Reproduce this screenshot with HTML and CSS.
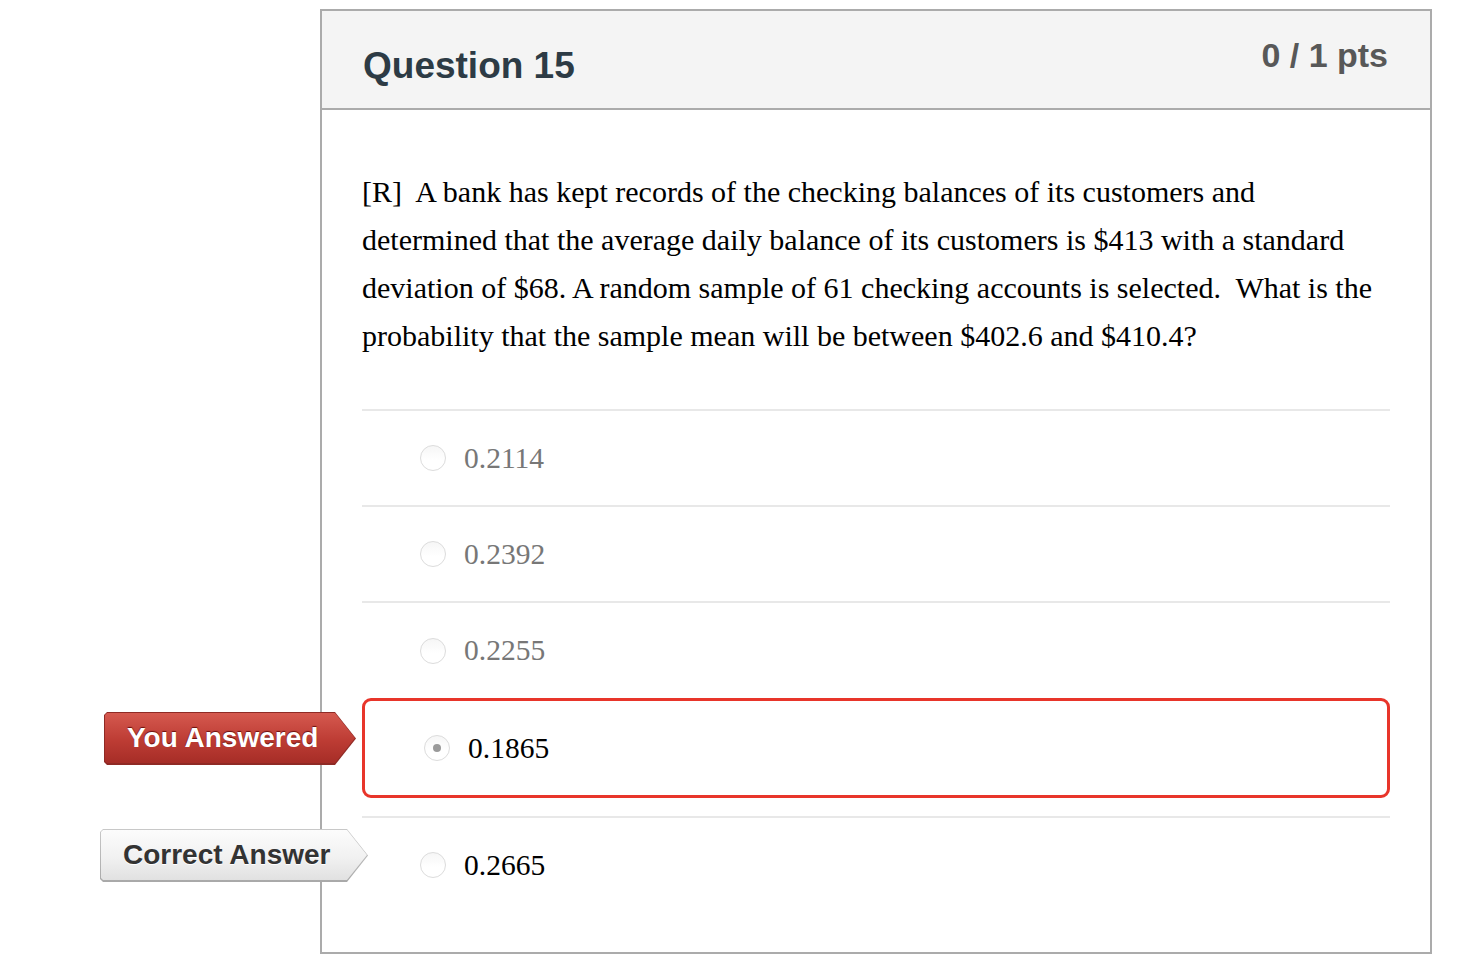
FILE: index.html
```html
<!DOCTYPE html>
<html>
<head>
<meta charset="utf-8">
<link rel="stylesheet" href="styles.css">
</head>
<body>
<div class="card">
  <div class="card-header">
    <h2 class="q-title">Question 15</h2>
    <div class="q-pts">0 / 1 pts</div>
  </div>
  <div class="card-body">
    <p class="q-text">[R]&nbsp; A bank has kept records of the checking balances of its customers and determined that the average daily balance of its customers is $413 with a standard deviation of $68. A random sample of 61 checking accounts is selected.&nbsp; What is the probability that the sample mean will be between $402.6 and $410.4?</p>
    <div class="answers">
      <div class="answer"><span class="radio"></span><span class="a-text">0.2114</span></div>
      <div class="answer"><span class="radio"></span><span class="a-text">0.2392</span></div>
      <div class="answer answer-short"><span class="radio"></span><span class="a-text">0.2255</span></div>
      <div class="answer answer-chosen">
        <div class="tag-wrap tag-you"><div class="tag tag-red">You Answered</div></div>
        <span class="radio radio-on"></span><span class="a-text a-dark">0.1865</span>
      </div>
      <div class="answer answer-correct">
        <div class="tag-wrap tag-correct"><div class="tag tag-gray">Correct Answer</div></div>
        <span class="radio"></span><span class="a-text a-dark">0.2665</span>
      </div>
    </div>
  </div>
</div>
</body>
</html>
```

FILE: styles.css
```css
html, body {
  margin: 0;
  padding: 0;
  background: #ffffff;
}

body {
  font-family: "Liberation Sans", Arial, sans-serif;
}

.card {
  margin: 9px 0 0 320px;
  width: 1108px;
  border: 2px solid #ababab;
  background: #fff;
}

.card-header {
  height: 97px;
  background: #f4f4f4;
  border-bottom: 2px solid #ababab;
  display: flex;
  justify-content: space-between;
  align-items: flex-start;
  padding: 0 42px 0 41px;
}

.q-title {
  margin: 36px 0 0 0;
  font-size: 37px;
  line-height: 1;
  font-weight: bold;
  color: #2d3b45;
}

.q-pts {
  margin-top: 27px;
  font-size: 34px;
  line-height: 1;
  font-weight: bold;
  color: #585858;
}

.card-body {
  padding: 58px 40px 40px 40px;
}

.q-text {
  margin: 0;
  font-family: "Liberation Serif", "Times New Roman", serif;
  font-size: 30px;
  line-height: 48px;
  color: #000;
}

.answers {
  margin-top: 49px;
}

.answer {
  position: relative;
  height: 94px;
  border-top: 2px solid #e8e8e8;
  display: flex;
  align-items: center;
  padding-left: 58px;
}

.answer-short {
  height: 95px;
}

.answer-chosen {
  height: 94px;
  border: 3px solid #e8352a;
  border-radius: 9px;
  padding-left: 59px;
}

.answer-correct {
  margin-top: 18px;
}

.radio {
  box-sizing: border-box;
  width: 26px;
  height: 26px;
  border-radius: 50%;
  border: 1px solid #dcdcdc;
  background: linear-gradient(#f6f6f6, #ffffff 60%);
  display: flex;
  align-items: center;
  justify-content: center;
  flex: none;
}

.radio-on::after {
  content: "";
  width: 8px;
  height: 8px;
  border-radius: 50%;
  background: #9a9a9a;
}

.a-text {
  margin-left: 18px;
  font-family: "Liberation Serif", "Times New Roman", serif;
  font-size: 29.5px;
  color: #777;
}

.a-dark {
  color: #000;
}

.tag-wrap {
  position: absolute;
  box-sizing: border-box;
  height: 53px;
  padding: 1px;
  clip-path: polygon(3px 0, calc(100% - 21px) 0, 100% 50%, calc(100% - 21px) 100%, 3px 100%, 0 calc(100% - 3px), 0 3px);
}

.tag-you {
  top: 11px;
  left: -261px;
  width: 252px;
  background: #8f2a25;
}

.tag-correct {
  top: 11px;
  left: -262px;
  width: 268px;
  background: linear-gradient(#c8c8c8, #a9a9a9);
}

.tag {
  box-sizing: border-box;
  height: 50px;
  width: 100%;
  display: flex;
  align-items: center;
  padding-left: 22px;
  font-family: "Liberation Sans", Arial, sans-serif;
  font-weight: bold;
  font-size: 28px;
  clip-path: polygon(2px 0, calc(100% - 20px) 0, 100% 50%, calc(100% - 20px) 100%, 2px 100%, 0 calc(100% - 2px), 0 2px);
}

.tag-red {
  color: #fff;
  background: linear-gradient(#d5594f, #bd3c34 55%, #a62d27);
  text-shadow: 0 -1px 1px rgba(80, 0, 0, 0.8);
}

.tag-gray {
  color: #333;
  background: linear-gradient(#fcfcfc, #f1f1f1 55%, #e1e1e1);
  text-shadow: 0 1px 0 #fff;
}
```
